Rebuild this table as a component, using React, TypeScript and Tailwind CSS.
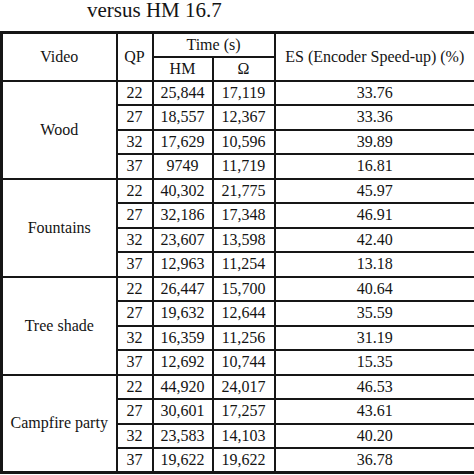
const groups = [
  {
    video: "Wood",
    rows: [
      ["22", "25,844", "17,119", "33.76"],
      ["27", "18,557", "12,367", "33.36"],
      ["32", "17,629", "10,596", "39.89"],
      ["37", "9749", "11,719", "16.81"],
    ],
  },
  {
    video: "Fountains",
    rows: [
      ["22", "40,302", "21,775", "45.97"],
      ["27", "32,186", "17,348", "46.91"],
      ["32", "23,607", "13,598", "42.40"],
      ["37", "12,963", "11,254", "13.18"],
    ],
  },
  {
    video: "Tree shade",
    rows: [
      ["22", "26,447", "15,700", "40.64"],
      ["27", "19,632", "12,644", "35.59"],
      ["32", "16,359", "11,256", "31.19"],
      ["37", "12,692", "10,744", "15.35"],
    ],
  },
  {
    video: "Campfire party",
    rows: [
      ["22", "44,920", "24,017", "46.53"],
      ["27", "30,601", "17,257", "43.61"],
      ["32", "23,583", "14,103", "40.20"],
      ["37", "19,622", "19,622", "36.78"],
    ],
  },
];

const cell =
  "border-2 border-[#161616] p-0 text-center align-middle font-normal [font-family:'Liberation_Serif','Times_New_Roman',serif] text-[16px] leading-none";

export default function App() {
  return (
    <div className="h-[475px] w-[474px] overflow-hidden bg-white [font-family:'Liberation_Serif','Times_New_Roman',serif] text-[#141414]">
      {/* Caption */}
      <div className="h-[31px] pt-[1px] pl-[87px] text-[21px] leading-[18px]">versus HM 16.7</div>

      {/* Table */}
      <table className="w-[474px] table-fixed border-collapse border-[3px] border-[#161616] [font-family:'Liberation_Serif','Times_New_Roman',serif] text-[16px] leading-none text-[#141414]">
        <colgroup>
          <col className="w-[115px]" />
          <col className="w-[36px]" />
          <col className="w-[60px]" />
          <col className="w-[62px]" />
          <col className="w-[201px]" />
        </colgroup>
        <thead>
          <tr className="h-[24px]">
            <th rowSpan={2} className={cell}>Video</th>
            <th rowSpan={2} className={cell}>QP</th>
            <th colSpan={2} className={cell}>Time (s)</th>
            <th rowSpan={2} className={cell}>ES (Encoder Speed-up) (%)</th>
          </tr>
          <tr className="h-[24px]">
            <th className={cell}>HM</th>
            <th className={cell}>Ω</th>
          </tr>
        </thead>
        <tbody>
          {groups.map((g) =>
            g.rows.map((r, i) => (
              <tr key={g.video + r[0]} className="h-[24.5px]">
                {i === 0 && (
                  <td rowSpan={4} className={cell}>
                    {g.video}
                  </td>
                )}
                {r.map((v, j) => (
                  <td key={j} className={cell}>
                    {v}
                  </td>
                ))}
              </tr>
            ))
          )}
        </tbody>
      </table>
    </div>
  );
}
